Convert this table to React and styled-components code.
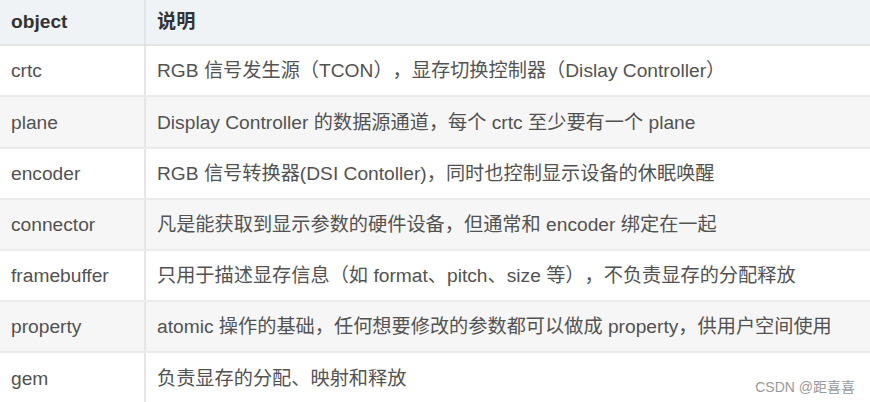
import React from "react";
import styled, { createGlobalStyle } from "styled-components";

const Global = createGlobalStyle`
  html, body { margin: 0; padding: 0; background: #fff; }
  body { font-family: "Liberation Sans", "Noto Sans CJK SC", sans-serif; }
`;

const Page = styled.div`
  position: relative;
  width: 870px;
  height: 402px;
  overflow: hidden;
`;

const Table = styled.table`
  width: 870px;
  border-collapse: collapse;
  table-layout: fixed;
  font-size: 19.2px;
  line-height: 24px;
  color: #525252;
  text-spacing-trim: space-all;
`;

const HeadCell = styled.th`
  height: 43.3px;
  padding: 0 11px 1px;
  text-align: left;
  font-weight: bold;
  color: #333;
  background: #eff3f5;
  border-bottom: 2px solid #e0e4e7;
  border-right: ${(p) => (p.$first ? "2px solid #e2e5e8" : "none")};
  width: ${(p) => (p.$first ? "122px" : "auto")};
`;

const Row = styled.tr`
  background: ${(p) => (p.$alt ? "#f6f6f6" : "#ffffff")};
`;

const Cell = styled.td`
  height: 48.2px;
  padding: 1px 11px 0;
  border-bottom: 2px solid #ebebeb;
  border-right: ${(p) => (p.$first ? "2px solid #e6e6e6" : "none")};
  white-space: nowrap;
  vertical-align: middle;
`;

const Watermark = styled.div`
  position: absolute;
  right: 15px;
  top: 376px;
  font-size: 14px;
  color: #999;
  font-family: "Liberation Sans", "Noto Sans CJK SC", sans-serif;
`;

const rows = [
  ["crtc", "RGB 信号发生源（TCON），显存切换控制器（Dislay Controller）"],
  ["plane", "Display Controller 的数据源通道，每个 crtc 至少要有一个 plane"],
  ["encoder", "RGB 信号转换器(DSI Contoller)，同时也控制显示设备的休眠唤醒"],
  ["connector", "凡是能获取到显示参数的硬件设备，但通常和 encoder 绑定在一起"],
  ["framebuffer", "只用于描述显存信息（如 format、pitch、size 等），不负责显存的分配释放"],
  ["property", "atomic 操作的基础，任何想要修改的参数都可以做成 property，供用户空间使用"],
  ["gem", "负责显存的分配、映射和释放"],
];

export default function App() {
  return (
    <>
      <Global />
      <Page>
        <Table>
          <thead>
            <tr>
              <HeadCell $first>object</HeadCell>
              <HeadCell>说明</HeadCell>
            </tr>
          </thead>
          <tbody>
            {rows.map(([k, v], i) => (
              <Row key={k} $alt={i % 2 === 1}>
                <Cell $first>{k}</Cell>
                <Cell>{v}</Cell>
              </Row>
            ))}
          </tbody>
        </Table>
        <Watermark>CSDN @距喜喜</Watermark>
      </Page>
    </>
  );
}
